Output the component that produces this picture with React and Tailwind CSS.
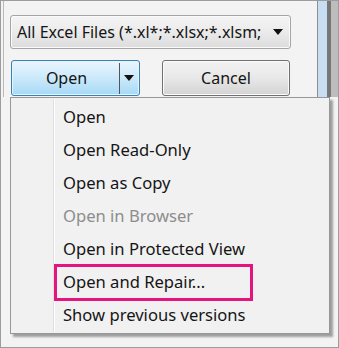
import React from 'react';

const menuItems = [
  { label: 'Open' },
  { label: 'Open Read-Only' },
  { label: 'Open as Copy' },
  { label: 'Open in Browser', disabled: true },
  { label: 'Open in Protected View' },
  { label: 'Open and Repair...', highlighted: true },
  { label: 'Show previous versions' },
];

const Caret = ({ className }) => (
  <svg width="10" height="6" viewBox="0 0 10 6" className={className}>
    <path d="M0 0h10L5 6z" fill="#111" />
  </svg>
);

const App = () => {
  return (
    <div className="relative w-[339px] h-[348px] overflow-hidden border border-[#9c9c9c] bg-[#f3f3f3] font-['Noto_Sans',sans-serif] text-[16px] text-[#151515]">
      {/* dialog bottom area + right window edge */}
      <div className="flex h-[96px]">
        <div className="flex-1 ml-[2px] border-l border-[#b9b9b9] pl-[6px] pt-[14px]">
          <div className="flex items-center justify-between w-[281px] h-[34px] rounded-[3px] border border-[#a5a5a5] bg-gradient-to-b from-[#f4f4f4] via-[#ebebeb] to-[#dcdcdc] pl-[6px] pr-[7px] shadow-[inset_0_0_0_1px_#fafafa]">
            <span className="whitespace-nowrap">All Excel Files (*.xl*;*.xlsx;*.xlsm;</span>
            <Caret />
          </div>

          <div className="flex mt-[11px] gap-[22px]">
            <div className="flex items-center w-[129px] h-[36px] ml-[1px] rounded-[3px] border border-[#3c7fb1] bg-gradient-to-b from-[#eaf6fd] via-[#cbe9fb] to-[#a7d9f5] shadow-[inset_0_0_0_1px_#e4f4fd]">
              <span className="flex-1 text-center pl-[2px]">Open</span>
              <div className="w-px h-[31px] bg-[#555] mr-[4px]" />
              <Caret className="mr-[5px]" />
            </div>
            <div className="flex items-center justify-center w-[128px] h-[36px] rounded-[3px] border border-[#707070] bg-gradient-to-b from-[#f2f2f2] via-[#e8e8e8] to-[#d3d3d3] shadow-[inset_0_0_0_1px_#fbfbfb]">
              Cancel
            </div>
          </div>
        </div>
        <div className="w-px bg-[#8e8e8e]" />
        <div className="w-[9px] bg-[#c9ddf2]" />
        <div className="w-[4px] bg-[#767676]" />
        <div className="w-[7px] bg-[#bdbdbd]" />
      </div>

      {/* popup menu */}
      <div className="absolute left-[9px] top-[96px] w-[320px] h-[237px] border border-[#979797] bg-[#f1f1f1] shadow-[3px_3px_2px_rgba(0,0,0,0.35)] text-[16.6px]">
        <div className="absolute left-[42px] top-[1px] bottom-[1px] w-px bg-[#e0e0e0]" />
        <div className="absolute left-[43px] top-[1px] bottom-[1px] w-px bg-white" />
        <div className="relative pt-[3px]">
          {menuItems.map((item) => (
            <div key={item.label} className="relative h-[33px] flex items-center pl-[52px]">
              <span className={item.disabled ? 'text-[#8d8d8d]' : ''}>{item.label}</span>
              {item.highlighted && (
                <div className="absolute left-[43px] top-[-2px] w-[199px] h-[37px] border-[3px] border-[#e5157f]" />
              )}
            </div>
          ))}
        </div>
      </div>
    </div>
  );
};

export default App;
